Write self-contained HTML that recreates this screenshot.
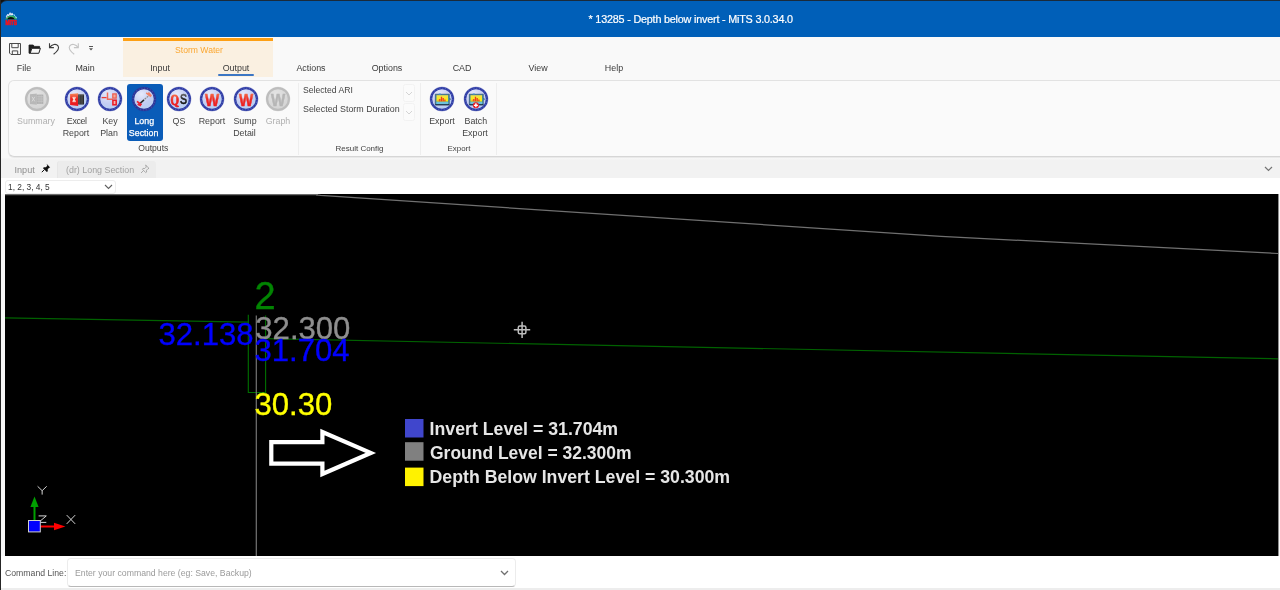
<!DOCTYPE html>
<html><head><meta charset="utf-8">
<style>
*{box-sizing:border-box;margin:0;padding:0}
html,body{width:1280px;height:590px;overflow:hidden;background:#f9f9f9;font-family:"Liberation Sans",sans-serif;}
.abs{position:absolute}
#win{will-change:transform;position:absolute;left:0;top:0;width:1280px;height:590px;background:#f9f9f9;overflow:hidden}
#title{position:absolute;left:0;top:0;width:1280px;height:37px;background:#005fb8;border-top:1px solid #1a2a3a;border-top-left-radius:7px}
#title .t{position:absolute;left:0;width:1381.4px;top:12.4px;text-align:center;color:#fff;font-size:10.8px;letter-spacing:-.2px;-webkit-text-stroke:.2px #fff;line-height:13px;white-space:pre}
#lb{position:absolute;left:0;top:0;width:1px;height:590px;background:#262626}
.tab{position:absolute;top:62px;font-size:8.9px;line-height:12px;color:#3a3a3a;transform:translateX(-50%);white-space:nowrap}
#ctx{position:absolute;left:123px;top:38px;width:150px;height:39px;background:#faf0e1;border-top:3px solid #fd9f14}
#ctx .n{position:absolute;left:0;width:152px;top:2.8px;text-align:center;font-size:8.6px;line-height:12px;color:#fba730}
#ribbon{position:absolute;left:8px;top:80px;width:1280px;height:77px;background:#fafafa;border:1px solid #e2e2e2;border-bottom:1px solid #d6d6d6;border-radius:6px 0 0 6px;box-shadow:0 1px 1px rgba(0,0,0,.07)}
.lbl{position:absolute;font-size:8.85px;line-height:12px;color:#444;text-align:center;transform:translateX(-50%);white-space:nowrap}
.lbl.dis{color:#b0b0b0}
.grp{position:absolute;top:142.600px;font-size:8.6px;line-height:12px;color:#444;transform:translateX(-50%);white-space:nowrap}
.sep{position:absolute;top:83px;width:1px;height:72px;background:#eeeeee}
.ico{position:absolute;top:85px;width:26px;height:26px;border-radius:50%;transform:translateX(-50%)}
#sel{position:absolute;left:126.600px;top:84px;width:36px;height:57px;background:#0a5cb8;border-radius:3px}
#docrow{position:absolute;left:1px;top:157.500px;width:1279px;height:20px;background:linear-gradient(#f6f6f6,#f2f2f2 2.500px)}
#combo{position:absolute;left:1px;top:178px;width:1279px;height:16px;background:#fff}
#canvas{position:absolute;left:5px;top:194px;width:1273px;height:362px;background:#000;overflow:hidden}
#bottom{position:absolute;left:1px;top:556px;width:1279px;height:34px;background:#fff}
</style></head><body>
<div id="win"><div class="abs" style="left:0;top:0;width:10px;height:10px;background:#111"></div>
 <div id="title"><div class="t">* 13285 - Depth below invert - MiTS 3.0.34.0</div></div>
 <div id="ctx"><div class="n">Storm Water</div></div>
 <div class="tab" style="left:24px">File</div>
 <div class="tab" style="left:85px">Main</div>
 <div class="tab" style="left:160px">Input</div>
 <div class="tab" style="left:236px">Output</div>
 <div class="abs" style="left:218px;top:74px;width:36px;height:2px;background:#3b76c4;border-radius:1px"></div>
 <div class="tab" style="left:311px">Actions</div>
 <div class="tab" style="left:387px">Options</div>
 <div class="tab" style="left:462px">CAD</div>
 <div class="tab" style="left:538px">View</div>
 <div class="tab" style="left:614px">Help</div>
 <div id="ribbon"></div>
 <div id="sel"></div>
 <svg width="0" height="0" style="position:absolute"><defs>
<radialGradient id="gb" cx="38%" cy="28%" r="80%"><stop offset="0" stop-color="#e6e9fa"/><stop offset="0.55" stop-color="#c3cdf2"/><stop offset="1" stop-color="#b3d0f2"/></radialGradient>
<radialGradient id="gg" cx="40%" cy="30%" r="75%"><stop offset="0" stop-color="#e4e4e4"/><stop offset="1" stop-color="#d2d2d2"/></radialGradient>
<linearGradient id="gr" x1="0" y1="0" x2="0" y2="1"><stop offset="0" stop-color="#f58a5c"/><stop offset="0.42" stop-color="#ee2a24"/><stop offset="1" stop-color="#ec1820"/></linearGradient>
<linearGradient id="gs" x1="0" y1="0" x2="0" y2="1"><stop offset="0" stop-color="#8a8a8a"/><stop offset="0.5" stop-color="#222"/><stop offset="1" stop-color="#000"/></linearGradient>
<linearGradient id="gy" x1="0" y1="0" x2="0" y2="1"><stop offset="0" stop-color="#f2e14a"/><stop offset="1" stop-color="#ffee00"/></linearGradient>
<filter id="bl" x="-10%" y="-10%" width="120%" height="120%"><feGaussianBlur stdDeviation=".35"/></filter>
</defs></svg><svg class="abs" style="left:23.85px;top:85.750px" width="26" height="26" viewBox="0 0 26 26"><g filter="url(#bl)"><circle cx="13" cy="13" r="10.900" fill="url(#gg)" stroke="#bdbdbd" stroke-width="2.200"/><circle cx="13" cy="13" r="12" fill="none" stroke="#bdbdbd" stroke-opacity=".4" stroke-width=".8"/><path d="M6 8.300L12.800 7.600V18.800L6 18.100Z" fill="#b8b8b8"/><rect x="12.800" y="8.600" width="6.500" height="9.300" fill="#b0b0b0"/><path d="M13.200 10.800h6M13.200 13h6M13.200 15.200h6" stroke="#d4d4d4" stroke-width=".6"/><path d="M15 8.800v9M17.200 8.800v9" stroke="#c8c8c8" stroke-width=".6"/><path d="M8 10.800l2.800 4.600M10.800 10.800l-2.800 4.600" stroke="#d8d8d8" stroke-width="1"/></g></svg><svg class="abs" style="left:63.85px;top:85.750px" width="26" height="26" viewBox="0 0 26 26"><g filter="url(#bl)"><circle cx="13" cy="13" r="10.900" fill="url(#gb)" stroke="#2e3ba4" stroke-width="2.200"/><circle cx="13" cy="13" r="10.900" fill="none" stroke="#5563bd" stroke-width="1.400" stroke-dasharray=".9 1.950"/><circle cx="13" cy="13" r="12.100" fill="none" stroke="#2e3ba4" stroke-opacity=".35" stroke-width=".8"/><path d="M6.100 8.100L14.200 7.300V19.900L6.100 19Z" fill="url(#gr)"/><rect x="14.300" y="8.300" width="5.600" height="10.200" fill="#1a1a1a"/><path d="M15.900 8.500v9.800M18 8.500v9.800" stroke="#9a9a9a" stroke-width=".7"/><path d="M14.300 8.700h5.600" stroke="#888" stroke-width=".8"/><path d="M8.800 11.400l2.600 4.200M11.400 11.400l-2.600 4.200" stroke="#fbe3dc" stroke-width="1.100"/><path d="M8.600 11.300h3M8.600 15.700h3" stroke="#fbe3dc" stroke-width=".8"/></g></svg><svg class="abs" style="left:97px;top:85.750px" width="26" height="26" viewBox="0 0 26 26"><g filter="url(#bl)"><circle cx="13" cy="13" r="10.900" fill="url(#gb)" stroke="#2e3ba4" stroke-width="2.200"/><circle cx="13" cy="13" r="10.900" fill="none" stroke="#5563bd" stroke-width="1.400" stroke-dasharray=".9 1.950"/><circle cx="13" cy="13" r="12.100" fill="none" stroke="#2e3ba4" stroke-opacity=".35" stroke-width=".8"/><path d="M4.600 11.600h5" stroke="#ee3b34" stroke-width="1.300"/><path d="M10.500 6.600v6.700h5.200" fill="none" stroke="#f06a58" stroke-width="1.500"/><rect x="15.800" y="7.900" width="3.400" height="4.200" fill="#f4a898" stroke="#ee5a4a" stroke-width="1.200"/><rect x="15.900" y="14.200" width="3.300" height="4.600" fill="#f6b0a8" stroke="#ea1c24" stroke-width="1.500"/></g></svg><svg class="abs" style="left:131.4px;top:85.750px" width="26" height="26" viewBox="0 0 26 26"><g filter="url(#bl)"><circle cx="13" cy="13" r="10.900" fill="url(#gb)" stroke="#2b3598" stroke-width="2.200"/><circle cx="13" cy="13" r="10.900" fill="none" stroke="#4854ac" stroke-width="1.400" stroke-dasharray=".9 1.950"/><circle cx="13" cy="13" r="12.100" fill="none" stroke="#2b3598" stroke-opacity=".35" stroke-width=".8"/><path d="M8 18.400L13 13.900" stroke="#2a2a2a" stroke-width="1.500"/><path d="M13.600 13.300L18.200 9.200" stroke="#8e8e8e" stroke-width="1.200" stroke-dasharray="2 .8"/><path d="M15.200 6.800l4.800 3.800M17.400 6.400l3 3.600" stroke="#f28266" stroke-width="1.500"/><path d="M6 15.300l4.600 3.600M6.600 18.200l3.400 1.600" stroke="#ee2430" stroke-width="1.700"/></g></svg><svg class="abs" style="left:166.3px;top:85.750px" width="26" height="26" viewBox="0 0 26 26"><g filter="url(#bl)"><circle cx="13" cy="13" r="10.900" fill="url(#gb)" stroke="#2e3ba4" stroke-width="2.200"/><circle cx="13" cy="13" r="10.900" fill="none" stroke="#5563bd" stroke-width="1.400" stroke-dasharray=".9 1.950"/><circle cx="13" cy="13" r="12.100" fill="none" stroke="#2e3ba4" stroke-opacity=".35" stroke-width=".8"/><text x="8.800" y="18.900" text-anchor="middle" font-family="Liberation Serif" font-weight="bold" font-size="14" fill="url(#gr)" stroke="url(#gr)" stroke-width=".8" textLength="8.500" lengthAdjust="spacingAndGlyphs">Q</text><text x="17.400" y="17.900" text-anchor="middle" font-family="Liberation Sans" font-size="14.500" fill="url(#gs)" stroke="url(#gs)" stroke-width=".7" textLength="7" lengthAdjust="spacingAndGlyphs">S</text></g></svg><svg class="abs" style="left:199.3px;top:85.750px" width="26" height="26" viewBox="0 0 26 26"><g filter="url(#bl)"><circle cx="13" cy="13" r="10.900" fill="url(#gb)" stroke="#2e3ba4" stroke-width="2.200"/><circle cx="13" cy="13" r="10.900" fill="none" stroke="#5563bd" stroke-width="1.400" stroke-dasharray=".9 1.950"/><circle cx="13" cy="13" r="12.100" fill="none" stroke="#2e3ba4" stroke-opacity=".35" stroke-width=".8"/><text x="13" y="20.200" text-anchor="middle" font-family="Liberation Sans" font-weight="bold" font-size="16.600" fill="url(#gr)" stroke="url(#gr)" stroke-width=".5" textLength="14.200" lengthAdjust="spacingAndGlyphs">W</text></g></svg><svg class="abs" style="left:232.6px;top:85.750px" width="26" height="26" viewBox="0 0 26 26"><g filter="url(#bl)"><circle cx="13" cy="13" r="10.900" fill="url(#gb)" stroke="#2e3ba4" stroke-width="2.200"/><circle cx="13" cy="13" r="10.900" fill="none" stroke="#5563bd" stroke-width="1.400" stroke-dasharray=".9 1.950"/><circle cx="13" cy="13" r="12.100" fill="none" stroke="#2e3ba4" stroke-opacity=".35" stroke-width=".8"/><text x="13" y="20.200" text-anchor="middle" font-family="Liberation Sans" font-weight="bold" font-size="16.600" fill="url(#gr)" stroke="url(#gr)" stroke-width=".5" textLength="14.200" lengthAdjust="spacingAndGlyphs">W</text></g></svg><svg class="abs" style="left:264.8px;top:85.750px" width="26" height="26" viewBox="0 0 26 26"><g filter="url(#bl)"><circle cx="13" cy="13" r="10.900" fill="url(#gg)" stroke="#bdbdbd" stroke-width="2.200"/><circle cx="13" cy="13" r="12" fill="none" stroke="#bdbdbd" stroke-opacity=".4" stroke-width=".8"/><text x="13" y="20.200" text-anchor="middle" font-family="Liberation Sans" font-weight="bold" font-size="16.600" fill="#b6b6b6" stroke="#b6b6b6" stroke-width=".5" textLength="14.200" lengthAdjust="spacingAndGlyphs">W</text></g></svg><svg class="abs" style="left:429px;top:85.750px" width="26" height="26" viewBox="0 0 26 26"><g filter="url(#bl)"><circle cx="13" cy="13" r="10.900" fill="url(#gb)" stroke="#2e3ba4" stroke-width="2.200"/><circle cx="13" cy="13" r="10.900" fill="none" stroke="#5563bd" stroke-width="1.400" stroke-dasharray=".9 1.950"/><circle cx="13" cy="13" r="12.100" fill="none" stroke="#2e3ba4" stroke-opacity=".35" stroke-width=".8"/><path d="M6.300 8.200H20.300V11.600L21.500 13.200L20.300 14.600V18.800H6.300Z" fill="#3b8aa0" stroke="#22304c" stroke-width=".5"/><rect x="7.500" y="9.200" width="11.600" height="6.400" fill="url(#gy)"/><path d="M10.800 15.400v-2.400M12.500 15.400v-4.600M14.200 15.400v-3.400M15.900 15.400v-2" stroke="#ee3a24" stroke-width="1.300"/><path d="M9.200 15.400v-1.600" stroke="#f59a2a" stroke-width="1.300"/><rect x="7.300" y="15.800" width="12" height="2.300" fill="#6cc3dc"/><path d="M6.300 18.800H20.300" stroke="#141c30" stroke-width=".9"/><rect x="9.800" y="7.300" width="2" height="1" fill="#5aa8e6"/></g></svg><svg class="abs" style="left:462.9px;top:85.750px" width="26" height="26" viewBox="0 0 26 26"><g filter="url(#bl)"><circle cx="13" cy="13" r="10.900" fill="url(#gb)" stroke="#2e3ba4" stroke-width="2.200"/><circle cx="13" cy="13" r="10.900" fill="none" stroke="#5563bd" stroke-width="1.400" stroke-dasharray=".9 1.950"/><circle cx="13" cy="13" r="12.100" fill="none" stroke="#2e3ba4" stroke-opacity=".35" stroke-width=".8"/><path d="M6.300 8.200H20.300V11.600L21.500 13.200L20.300 14.600V18.800H6.300Z" fill="#3b8aa0" stroke="#22304c" stroke-width=".5"/><rect x="7.500" y="9.200" width="11.600" height="6.400" fill="url(#gy)"/><path d="M10.800 15.400v-2.400M12.500 15.400v-4.600M14.200 15.400v-3.400M15.900 15.400v-2" stroke="#ee3a24" stroke-width="1.300"/><path d="M9.200 15.400v-1.600" stroke="#f59a2a" stroke-width="1.300"/><rect x="7.300" y="15.800" width="12" height="2.300" fill="#6cc3dc"/><path d="M6.300 18.800H20.300" stroke="#141c30" stroke-width=".9"/><rect x="9.800" y="7.300" width="2" height="1" fill="#5aa8e6"/><circle cx="12.900" cy="19.300" r="3" fill="#ea1a24"/><path d="M12.900 17.300v4M10.900 19.300h4" stroke="#fff" stroke-width="1.300"/><circle cx="12.900" cy="19.300" r="1" fill="#fff"/></g></svg><div class="lbl dis" style="left:36px;top:115px">Summary</div><div class="lbl " style="left:76.800px;top:115px;letter-spacing:-.35px">Excel</div><div class="lbl " style="left:76px;top:127px">Report</div><div class="lbl " style="left:110px;top:115px">Key</div><div class="lbl " style="left:109px;top:127px">Plan</div><div class="lbl" style="left:144.300px;top:115px;color:#fff;-webkit-text-stroke:.25px #fff">Long</div><div class="lbl" style="left:143.600px;top:127px;color:#fff;-webkit-text-stroke:.25px #fff">Section</div><div class="lbl " style="left:179px;top:115px">QS</div><div class="lbl " style="left:212px;top:115px">Report</div><div class="lbl " style="left:245px;top:115px">Sump</div><div class="lbl " style="left:244.500px;top:127px">Detail</div><div class="lbl dis" style="left:278px;top:115px">Graph</div><div class="lbl " style="left:442px;top:115px">Export</div><div class="lbl " style="left:475.800px;top:115px">Batch</div><div class="lbl " style="left:475px;top:127px">Export</div><div class="grp" style="left:153.300px;top:142.100px">Outputs</div><div class="grp" style="left:359.500px;font-size:8px">Result Config</div><div class="grp" style="left:459px;font-size:7.900px">Export</div><div class="sep" style="left:298px"></div><div class="sep" style="left:420px"></div><div class="sep" style="left:496px"></div><div class="abs" style="left:303px;top:84px;font-size:8.65px;line-height:12px;color:#444">Selected ARI</div><div class="abs" style="left:303px;top:103px;font-size:8.9px;line-height:12px;color:#444">Selected Storm Duration</div><svg class="abs" style="left:403px;top:84px" width="12" height="38" viewBox="0 0 12 38"><rect x=".5" y=".5" width="11" height="17" rx="2" fill="#fbfbfb" stroke="#f2f2f2"/><rect x=".5" y="19.5" width="11" height="17" rx="2" fill="#fbfbfb" stroke="#f2f2f2"/><path d="M3 8l3 3 3-3M3 27l3 3 3-3" fill="none" stroke="#d4d4d4" stroke-width="1"/></svg>
 <div id="docrow"></div>
 <div id="combo"></div>
 <div id="canvas"><svg class="abs" style="left:0;top:0" width="1273" height="362" viewBox="5 194 1273 362">
<path d="M5 194.500H318" fill="none" stroke="#6c6c6c" stroke-width="1.700"/><path d="M316 194.900L320.600 195.400L941 236.400L1278 253.500" fill="none" stroke="#707070" stroke-width="1.200"/>
<path d="M5 317.800L248.300 322.200" stroke="#006200" stroke-width="1.200"/><path d="M265.600 338.600L1278 358.800" stroke="#006200" stroke-width="1.200"/>
<path d="M248.300 314.800V392.500H265.600V315.500" fill="none" stroke="#007000" stroke-width="1.100"/>
<path d="M256.300 315.500V556" stroke="#747474" stroke-width="1.200"/>
<g font-family="Liberation Sans">
<text x="254.400" y="308.600" font-size="38" fill="#028402" stroke="#028402" stroke-width=".35">2</text>
<text x="255.300" y="338.600" font-size="31.100" fill="#8e8e8e" stroke="#8e8e8e" stroke-width=".35">32.300</text>
<text x="158.500" y="344.800" font-size="31.100" fill="#0000ff" stroke="#0000ff" stroke-width=".35">32.138</text>
<text x="254.500" y="361.200" font-size="31.100" fill="#0000ff" stroke="#0000ff" stroke-width=".35">31.704</text>
<text x="254.500" y="414.800" font-size="31.100" fill="#ffff00" stroke="#ffff00" stroke-width=".35">30.30</text>
</g>
<g stroke="#bdbdbd" stroke-width="1.500" fill="none"><rect x="518.300" y="325.900" width="7.600" height="7.800" rx="1.500"/><path d="M513.800 329.800H530.200M522.100 321.800V338"/></g>
<path d="M271.300 442.200H322.400V432L370.800 452.900L322.400 474V463.700H271.300Z" fill="none" stroke="#fff" stroke-width="4.200" stroke-linejoin="miter"/>
<rect x="405" y="419" width="18.500" height="18.500" fill="#4046cc"/><rect x="405" y="442.200" width="18.500" height="18.500" fill="#808080"/><rect x="405" y="467.600" width="18.500" height="18.500" fill="#fff200"/>
<g font-family="Liberation Sans" font-weight="bold" font-size="18" fill="#e6e6e6">
<text x="429.600" y="435.200" textLength="188.500" lengthAdjust="spacingAndGlyphs">Invert Level = 31.704m</text>
<text x="430" y="459.200" textLength="201.500" lengthAdjust="spacingAndGlyphs">Ground Level = 32.300m</text>
<text x="429.600" y="483.200" textLength="300.500" lengthAdjust="spacingAndGlyphs">Depth Below Invert Level = 30.300m</text>
</g>
<g>
<path d="M34.500 521V506" stroke="#00a000" stroke-width="2"/><path d="M34.500 496.400L38.600 507H30.400Z" fill="#00a000"/>
<path d="M40 526.500H54.500" stroke="#ff0000" stroke-width="2"/><path d="M65.400 526.500L54 522.700V530.300Z" fill="#ff0000"/>
<path d="M38.600 515.900H46.300L38.600 522.400H46.300" fill="none" stroke="#d4d4d4" stroke-width="1"/><rect x="28.500" y="520.500" width="11.800" height="11.400" fill="#0000ff" stroke="#d0d0d0" stroke-width="1"/>
<path d="M37.600 486.300L42.150 490.700L46.700 486.300M42.150 490.700V494.600M66.700 515.100L75.200 523.900M75.200 515.100L66.700 523.900" fill="none" stroke="#d4d4d4" stroke-width="1"/>
</g>
</svg></div>
 <div id="bottom"></div>
 <div class="abs" style="left:57px;top:160.500px;width:99px;height:17px;background:#ececec;border-left:1px solid #e6e6e6;border-radius:3px 3px 0 0"></div>
<div class="abs" style="left:14.500px;top:163.500px;font-size:9.100px;line-height:12px;color:#8e8e8e">Input</div>
<svg class="abs" style="left:40.500px;top:163.300px" width="10" height="10" viewBox="0 0 10 10"><path d="M5.600 .8l3.600 3.600-1 .3-1.500 1.500 .1 2-1 .8-3.800-3.800 .8-1 2 .1 1.500-1.500z" fill="#111"/><path d="M3.400 6.600l-2.600 2.600" stroke="#111" stroke-width="1"/></svg>
<div class="abs" style="left:66px;top:163.500px;font-size:8.900px;line-height:12px;color:#a2a2a2">(dr) Long Section</div>
<svg class="abs" style="left:139.700px;top:163.500px" width="10" height="10" viewBox="0 0 10 10"><path d="M5.600 1l3.400 3.400-1 .3-1.500 1.500 .1 1.800-.8 .7-3.500-3.500 .7-.8 1.800 .1 1.500-1.500z" fill="none" stroke="#9a9a9a" stroke-width=".8"/><path d="M3.400 6.600l-2.400 2.400" stroke="#9a9a9a" stroke-width=".8"/></svg>
<svg class="abs" style="left:1264px;top:166px" width="9" height="6" viewBox="0 0 9 6"><path d="M1 1l3.500 3.500 3.500-3.500" fill="none" stroke="#747474" stroke-width="1.200"/></svg>
<div class="abs" style="left:5px;top:179.500px;width:111px;height:14.200px;background:#fff;border:1px solid #ededed;border-radius:3px"></div>
<div class="abs" style="left:8px;top:180.500px;font-size:8.350px;line-height:12px;color:#333">1, 2, 3, 4, 5</div>
<svg class="abs" style="left:104px;top:183.700px" width="9" height="6" viewBox="0 0 9 6"><path d="M1 1l3.500 3.500 3.500-3.500" fill="none" stroke="#606060" stroke-width="1.100"/></svg><div class="abs" style="left:5px;top:566.500px;font-size:8.700px;line-height:12px;color:#555">Command Line:</div>
<div class="abs" style="left:67px;top:557.500px;width:449px;height:29.200px;background:#fff;border:1px solid #ececec;border-bottom:1.500px solid #b8b8b8;border-radius:4px"></div>
<div class="abs" style="left:75px;top:566.500px;font-size:8.700px;line-height:12px;color:#9a9a9a">Enter your command here (eg: Save, Backup)</div>
<svg class="abs" style="left:500px;top:569.700px" width="9" height="6" viewBox="0 0 9 6"><path d="M1 1l3.500 3.500 3.500-3.500" fill="none" stroke="#707070" stroke-width="1.300"/></svg>
<div class="abs" style="left:1px;top:588.300px;width:1279px;height:2px;background:#ededed"></div><svg class="abs" style="left:0;top:38px" width="110" height="22" viewBox="0 38 110 22">
<path d="M9.5 43.5h11v11h-9.5l-1.5-1.5z" fill="none" stroke="#4a4a4a" stroke-width="1"/><path d="M11.8 43.5v4.2h6.4v-4.2M12.3 54.5v-3.6h5.4v3.6" fill="none" stroke="#4a4a4a" stroke-width="1"/>
<path d="M29 45h4.2l1.2 1.4h5.2v1.6h-8l-1.6 5.2h-1z" fill="#1e1e1e" stroke="#1e1e1e" stroke-width=".8" stroke-linejoin="round"/><path d="M31.8 48.3h8.6l-1.6 5h-8.6z" fill="#f9f9f9" stroke="#1e1e1e" stroke-width="1" stroke-linejoin="round"/>
<path d="M49.5 43.2v4.4h4.4" fill="none" stroke="#3c3c3c" stroke-width="1.1"/><path d="M49.8 47.4c2-3.4 6.4-4 8.2-1.6c1.6 2.2 .4 4.600-4.400 8.400" fill="none" stroke="#3c3c3c" stroke-width="1.1"/>
<path d="M78.300 43.2v4.4h-4.400" fill="none" stroke="#c4c4c4" stroke-width="1.1"/><path d="M78 47.4c-2-3.400-6.400-4-8.200-1.600c-1.600 2.200-.4 4.600 4.400 8.400" fill="none" stroke="#c4c4c4" stroke-width="1.1"/>
<path d="M89 46.5h4" stroke="#555" stroke-width="1"/><path d="M89 48.2h4l-2 2.200z" fill="#555"/>
</svg><svg class="abs" style="left:3px;top:10px" width="18" height="17" viewBox="3 10 18 17">
<path d="M5.200 19.300C6.200 16.600 8.200 15.400 11 15.400S15.800 16.600 17.200 19.300Z" fill="#2fae5c"/>
<path d="M7.300 19.300C8 17.700 9.200 16.900 10.900 16.900S13.800 17.700 14.700 19.300Z" fill="#0a0a0a"/>
<path d="M6.200 16.800l1.600-2.200 1 .9 1.300-2.600 .9 2.200 1.100-1.700 .8 1.600" fill="none" stroke="#e9eefc" stroke-width="1.100" stroke-linejoin="round"/>
<path d="M13.600 14.300l1.300 1.500M15.300 16.300l1.400 1.900" stroke="#8fdcf2" stroke-width="1.100"/>
<path d="M6.400 17.600l1.200-.6" stroke="#f7b4c4" stroke-width="1"/><path d="M12.300 15.800l.9 .5" stroke="#4ccf7a" stroke-width="1"/>
<text x="11.200" y="24.500" text-anchor="middle" font-family="Liberation Sans" font-weight="bold" font-size="7" fill="#f0141e" stroke="#f0141e" stroke-width=".7" textLength="11.600" lengthAdjust="spacingAndGlyphs">MiTS</text></svg><div class="abs" style="left:1278px;top:194px;width:1px;height:362px;background:#8e8e8e"></div><div id="lb"></div>
</div>
</body></html>
